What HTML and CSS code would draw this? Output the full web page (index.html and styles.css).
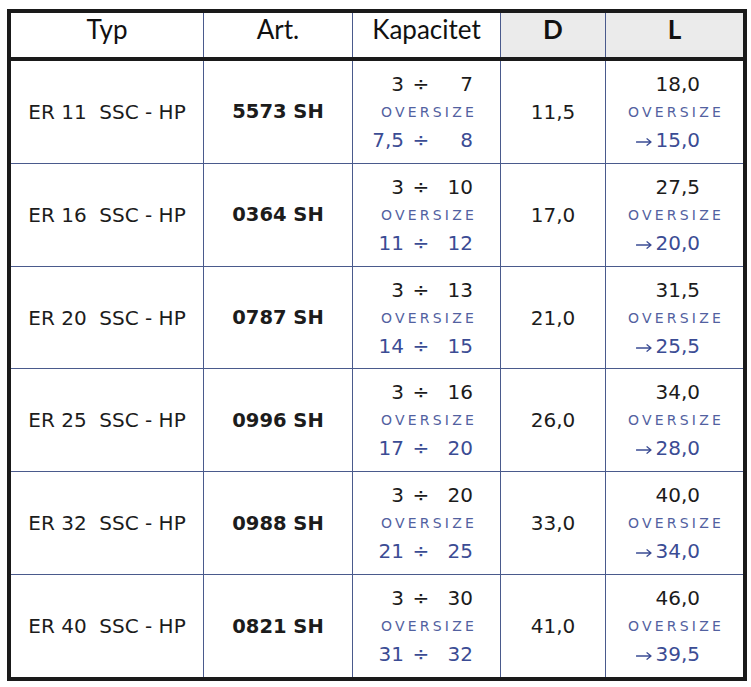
FILE: index.html
```html
<!DOCTYPE html>
<html lang="sv">
<head>
<meta charset="utf-8">
<title>ER SSC - HP</title>
<link rel="stylesheet" href="styles.css">
</head>
<body>
<div class="table">
  <div class="row head">
    <div class="cell">Typ</div>
    <div class="cell">Art.</div>
    <div class="cell">Kapacitet</div>
    <div class="cell shade bold">D</div>
    <div class="cell shade bold">L</div>
  </div>

  <div class="row">
    <div class="cell typ">ER 11&nbsp; SSC - HP</div>
    <div class="cell art">5573 SH</div>
    <div class="cell kap">
      <div class="range"><span>3</span><span>÷</span><span>7</span></div>
      <div class="over">OVERSIZE</div>
      <div class="range blue"><span>7,5</span><span>÷</span><span>8</span></div>
    </div>
    <div class="cell num">11,5</div>
    <div class="cell len">
      <div class="lval">18,0</div>
      <div class="over">OVERSIZE</div>
      <div class="lval blue"><svg class="arrow" viewBox="0 0 16 10" aria-hidden="true"><path d="M0.5 5H15M11 1.8L15 5L11 8.2"/></svg>15,0</div>
    </div>
  </div>

  <div class="row">
    <div class="cell typ">ER 16&nbsp; SSC - HP</div>
    <div class="cell art">0364 SH</div>
    <div class="cell kap">
      <div class="range"><span>3</span><span>÷</span><span>10</span></div>
      <div class="over">OVERSIZE</div>
      <div class="range blue"><span>11</span><span>÷</span><span>12</span></div>
    </div>
    <div class="cell num">17,0</div>
    <div class="cell len">
      <div class="lval">27,5</div>
      <div class="over">OVERSIZE</div>
      <div class="lval blue"><svg class="arrow" viewBox="0 0 16 10" aria-hidden="true"><path d="M0.5 5H15M11 1.8L15 5L11 8.2"/></svg>20,0</div>
    </div>
  </div>

  <div class="row">
    <div class="cell typ">ER 20&nbsp; SSC - HP</div>
    <div class="cell art">0787 SH</div>
    <div class="cell kap">
      <div class="range"><span>3</span><span>÷</span><span>13</span></div>
      <div class="over">OVERSIZE</div>
      <div class="range blue"><span>14</span><span>÷</span><span>15</span></div>
    </div>
    <div class="cell num">21,0</div>
    <div class="cell len">
      <div class="lval">31,5</div>
      <div class="over">OVERSIZE</div>
      <div class="lval blue"><svg class="arrow" viewBox="0 0 16 10" aria-hidden="true"><path d="M0.5 5H15M11 1.8L15 5L11 8.2"/></svg>25,5</div>
    </div>
  </div>

  <div class="row">
    <div class="cell typ">ER 25&nbsp; SSC - HP</div>
    <div class="cell art">0996 SH</div>
    <div class="cell kap">
      <div class="range"><span>3</span><span>÷</span><span>16</span></div>
      <div class="over">OVERSIZE</div>
      <div class="range blue"><span>17</span><span>÷</span><span>20</span></div>
    </div>
    <div class="cell num">26,0</div>
    <div class="cell len">
      <div class="lval">34,0</div>
      <div class="over">OVERSIZE</div>
      <div class="lval blue"><svg class="arrow" viewBox="0 0 16 10" aria-hidden="true"><path d="M0.5 5H15M11 1.8L15 5L11 8.2"/></svg>28,0</div>
    </div>
  </div>

  <div class="row">
    <div class="cell typ">ER 32&nbsp; SSC - HP</div>
    <div class="cell art">0988 SH</div>
    <div class="cell kap">
      <div class="range"><span>3</span><span>÷</span><span>20</span></div>
      <div class="over">OVERSIZE</div>
      <div class="range blue"><span>21</span><span>÷</span><span>25</span></div>
    </div>
    <div class="cell num">33,0</div>
    <div class="cell len">
      <div class="lval">40,0</div>
      <div class="over">OVERSIZE</div>
      <div class="lval blue"><svg class="arrow" viewBox="0 0 16 10" aria-hidden="true"><path d="M0.5 5H15M11 1.8L15 5L11 8.2"/></svg>34,0</div>
    </div>
  </div>

  <div class="row">
    <div class="cell typ">ER 40&nbsp; SSC - HP</div>
    <div class="cell art">0821 SH</div>
    <div class="cell kap">
      <div class="range"><span>3</span><span>÷</span><span>30</span></div>
      <div class="over">OVERSIZE</div>
      <div class="range blue"><span>31</span><span>÷</span><span>32</span></div>
    </div>
    <div class="cell num">41,0</div>
    <div class="cell len">
      <div class="lval">46,0</div>
      <div class="over">OVERSIZE</div>
      <div class="lval blue"><svg class="arrow" viewBox="0 0 16 10" aria-hidden="true"><path d="M0.5 5H15M11 1.8L15 5L11 8.2"/></svg>39,5</div>
    </div>
  </div>
</div>
</body>
</html>
```

FILE: styles.css
```css
* { box-sizing: border-box; }

html, body {
  margin: 0;
  padding: 0;
  background: #ffffff;
}

body {
  padding: 9px 0 0 7px;
  font-family: "DejaVu Sans", "Liberation Sans", sans-serif;
  color: #1c1c1c;
}

.table {
  width: 740px;
  height: 672px;
  border: 4px solid #1a1a1a;
  display: flex;
  flex-direction: column;
  background: #ffffff;
}

.row {
  display: grid;
  grid-template-columns: 193px 149px 148px 105px 137px;
  flex: 1;
  min-height: 0;
  border-top: 1px solid #4a5a8c;
}

.row.head {
  flex: 0 0 48px;
  border-top: none;
  border-bottom: 4px solid #1a1a1a;
}

.row.head + .row {
  border-top: none;
}

.cell {
  border-right: 1px solid #4a5a8c;
  display: flex;
  flex-direction: column;
  justify-content: center;
  align-items: center;
  font-size: 20px;
}

.cell:last-child {
  border-right: none;
}

.head .cell {
  font-family: "Lato", "Liberation Sans", sans-serif;
  font-size: 26px;
  line-height: 30px;
  color: #111111;
  justify-content: flex-start;
  padding-top: 1px;
}

.head .cell.shade {
  background: #ebebeb;
}

.head .cell.bold {
  font-weight: 700;
}

.typ {
  white-space: nowrap;
}

.art {
  font-weight: 700;
  font-size: 19.5px;
}

.kap,
.len {
  align-items: stretch;
  line-height: 28px;
}

.range {
  display: grid;
  grid-template-columns: 40px 34px 35px;
  padding-left: 11px;
}

.range span {
  text-align: right;
}

.range span:nth-child(2) {
  text-align: center;
}

.blue {
  color: #3b4c94;
}

.over {
  font-size: 14px;
  letter-spacing: 3.2px;
  color: #5261a0;
  text-align: center;
  padding-left: 5px;
}

.len .over {
  padding-left: 3px;
}

.lval {
  text-align: right;
  padding-right: 43px;
}

.arrow {
  width: 16px;
  height: 10px;
  margin-right: 3px;
  vertical-align: 0;
  fill: none;
  stroke: currentColor;
  stroke-width: 1.3;
  stroke-linecap: round;
  stroke-linejoin: round;
}
```
